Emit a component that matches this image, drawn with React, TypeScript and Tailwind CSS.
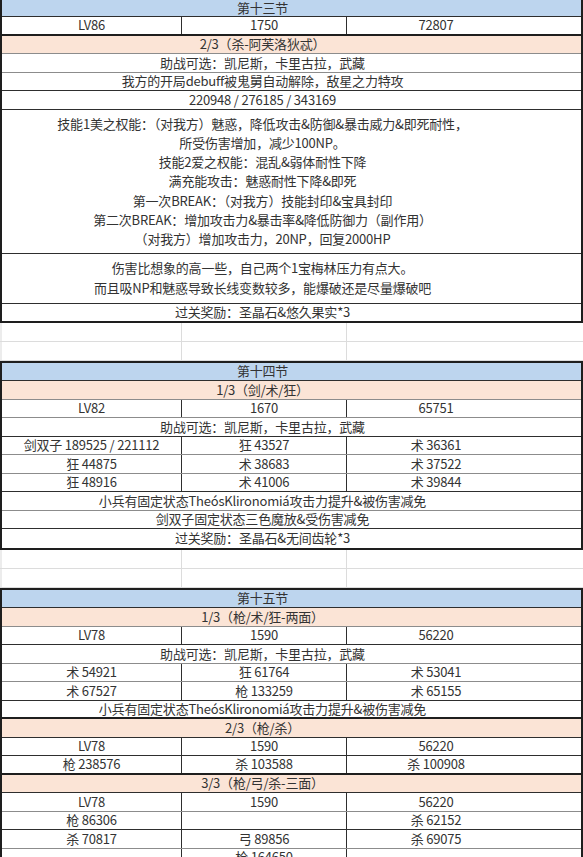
import React from "react";

const D = "border-b border-[#2e2e2e]";
const G = "border-b border-[#8c8c8c]";
const T = "border-b-2 border-[#1e1e1e]";
const N = "";

function Full({ text, bg = "bg-white", b = D, h = "h-[18.5px]" }: { text: string; bg?: string; b?: string; h?: string }) {
  return (
    <div className={`${h} ${bg} ${b} flex items-center justify-center pr-[58px] leading-[16px] whitespace-nowrap`}>
      {text}
    </div>
  );
}

function Row3({ a, m, c, b = D }: { a: string; m: string; c: string; b?: string }) {
  return (
    <div className={`h-[18.5px] ${b} grid grid-cols-[180px_165px_1fr] leading-[16px] whitespace-nowrap`}>
      <div className="border-r border-[#2e2e2e] flex items-center justify-center">{a}</div>
      <div className="border-r border-[#2e2e2e] flex items-center justify-center">{m}</div>
      <div className="flex items-center justify-center pr-[56px]">{c}</div>
    </div>
  );
}

function Gap() {
  return (
    <div className="flex flex-col">
      {[0, 1].map((i) => (
        <div key={i} className="h-[19px] grid grid-cols-[182px_165px_1fr] border-b border-[#dcdcdc]">
          <div className="border-r border-[#dcdcdc] border-l-2 border-l-[#ececec]" />
          <div className="border-r border-[#dcdcdc]" />
          <div />
        </div>
      ))}
    </div>
  );
}

const BLUE = "bg-[#bdd5ee]";
const ORANGE = "bg-[#fbe4d6]";

export default function App() {
  return (
    <div className="w-[583px] h-[857px] overflow-hidden bg-white text-[13px] text-[#333333] font-['Noto_Sans_CJK_SC','Noto_Sans',sans-serif] tracking-[-0.2px]">
      {/* Section 13 */}
      <div className="border-x-2 border-b-2 border-[#1e1e1e]">
        <Full text="第十三节" bg={BLUE} b={D} h="h-[17px]" />
        <Row3 a="LV86" m="1750" c="72807" b={T} />
        <Full text="2/3（杀-阿芙洛狄忒）" bg={ORANGE} b={G} />
        <Full text="助战可选：凯尼斯，卡里古拉，武藏" b={G} />
        <Full text="我方的开局debuff被鬼舅自动解除，敌星之力特攻" b={D} />
        <Full text="220948 / 276185 / 343169" b={D} />
        <div className={`h-[144px] ${D} flex flex-col items-center justify-center pr-[58px] leading-[19.2px] whitespace-nowrap`}>
          <div>技能1美之权能：（对我方）魅惑，降低攻击&amp;防御&amp;暴击威力&amp;即死耐性，</div>
          <div>所受伤害增加，减少100NP。</div>
          <div>技能2爱之权能：混乱&amp;弱体耐性下降</div>
          <div>满充能攻击：魅惑耐性下降&amp;即死</div>
          <div>第一次BREAK：（对我方）技能封印&amp;宝具封印</div>
          <div>第二次BREAK：增加攻击力&amp;暴击率&amp;降低防御力（副作用）</div>
          <div>（对我方）增加攻击力，20NP，回复2000HP</div>
        </div>
        <div className={`h-[50px] ${D} flex flex-col items-center justify-center pr-[58px] leading-[20px] whitespace-nowrap`}>
          <div>伤害比想象的高一些，自己两个1宝梅林压力有点大。</div>
          <div>而且吸NP和魅惑导致长线变数较多，能爆破还是尽量爆破吧</div>
        </div>
        <Full text="过关奖励：圣晶石&悠久果实*3" b={N} h="h-[17px]" />
      </div>

      <Gap />

      {/* Section 14 */}
      <div className="border-2 border-[#1e1e1e]">
        <Full text="第十四节" bg={BLUE} b={D} />
        <Full text="1/3（剑/术/狂）" bg={ORANGE} b={G} />
        <Row3 a="LV82" m="1670" c="65751" b={G} />
        <Full text="助战可选：凯尼斯，卡里古拉，武藏" b={D} />
        <Row3 a="剑双子 189525 / 221112" m="狂 43527" c="术 36361" b={G} />
        <Row3 a="狂 44875" m="术 38683" c="术 37522" b={G} />
        <Row3 a="狂 48916" m="术 41006" c="术 39844" b={D} />
        <Full text="小兵有固定状态TheósKlironomiá攻击力提升&被伤害减免" b={G} />
        <Full text="剑双子固定状态三色魔放&受伤害减免" b={D} />
        <Full text="过关奖励：圣晶石&无间齿轮*3" b={N} />
      </div>

      <Gap />

      {/* Section 15 */}
      <div className="border-x-2 border-t-2 border-[#1e1e1e]">
        <Full text="第十五节" bg={BLUE} b={D} />
        <Full text="1/3（枪/术/狂-两面）" bg={ORANGE} b={G} />
        <Row3 a="LV78" m="1590" c="56220" b={D} />
        <Full text="助战可选：凯尼斯，卡里古拉，武藏" b={G} />
        <Row3 a="术 54921" m="狂 61764" c="术 53041" b={G} />
        <Row3 a="术 67527" m="枪 133259" c="术 65155" b={D} />
        <Full text="小兵有固定状态TheósKlironomiá攻击力提升&被伤害减免" b={T} />
        <Full text="2/3（枪/杀）" bg={ORANGE} b={D} />
        <Row3 a="LV78" m="1590" c="56220" b={D} />
        <Row3 a="枪 238576" m="杀 103588" c="杀 100908" b={T} />
        <Full text="3/3（枪/弓/杀-三面）" bg={ORANGE} b={D} />
        <Row3 a="LV78" m="1590" c="56220" b={G} />
        <Row3 a="枪 86306" m="" c="杀 62152" b={D} />
        <Row3 a="杀 70817" m="弓 89856" c="杀 69075" b={G} />
        <Row3 a="" m="枪 164650" c="" b={D} />
      </div>
    </div>
  );
}
